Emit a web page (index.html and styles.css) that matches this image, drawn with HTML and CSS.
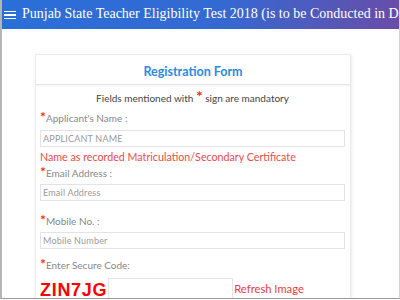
FILE: index.html
```html
<html>
<head>
  <title>PSTET 2018 - Registration</title>
  <link rel="stylesheet" href="styles.css">
</head>
<body>
  <div class="page">
    <div class="topbar">
      <div class="burger"><span></span><span></span><span></span></div>
      <div class="title">Punjab State Teacher Eligibility Test 2018 (is to be Conducted in December 2018)</div>
    </div>

    <div class="card">
      <div class="card-head">Registration Form</div>
      <div class="card-body">
        <div class="note">Fields mentioned with <span class="star big">*</span> sign are mandatory</div>

        <div class="label first"><span class="star">*</span>Applicant's Name :</div>
        <input class="field" type="text" placeholder="APPLICANT NAME">
        <div class="hint">Name as recorded Matriculation/Secondary Certificate</div>

        <div class="label tight"><span class="star">*</span>Email Address :</div>
        <input class="field" type="text" placeholder="Email Address">

        <div class="label"><span class="star">*</span>Mobile No. :</div>
        <input class="field" type="text" placeholder="Mobile Number">

        <div class="label code-label"><span class="star">*</span>Enter Secure Code:</div>
        <div class="captcha">
          <span class="code">ZIN7JG</span>
          <input class="code-input" type="text">
          <a class="refresh" href="#">Refresh Image</a>
        </div>
      </div>
    </div>
  </div>
</body>
</html>
```

FILE: styles.css
```css
html, body {
  margin: 0;
  padding: 0;
  height: 100%;
  overflow: hidden;
}
body {
  font: 10px Lato, sans-serif;
  background: #fff;
}
.page {
  height: 299px;
  box-sizing: border-box;
  border-left: 2px solid #b5b5b5;
  border-right: 1px solid #d5d5d5;
  border-bottom: 1px solid #999;
  overflow: hidden;
}
.topbar {
  height: 29px;
  margin-left: -2px;
  margin-right: -1px;
  display: flex;
  align-items: center;
  background: linear-gradient(100deg, #2a6fd9 0%, #3469d2 55%, #6a4ca8 100%);
  color: #fff;
  overflow: hidden;
  white-space: nowrap;
}
.burger {
  display: flex;
  flex-direction: column;
  gap: 2px;
  width: 12px;
  margin: 1px 6px 0 4px;
  flex: none;
}
.burger span {
  display: block;
  height: 1.5px;
  background: #fff;
}
.title {
  font: 14px "Liberation Serif", serif;
  margin-top: -1px;
}
.card {
  margin: 25px 0 0 33px;
  width: 314px;
  height: 260px;
  border: 1px solid #ececec;
  box-shadow: 1px 1px 3px rgba(0, 0, 0, 0.08);
}
.card-head {
  height: 30px;
  box-sizing: border-box;
  padding-top: 10px;
  line-height: 14px;
  text-align: center;
  font-weight: bold;
  font-size: 12.5px;
  color: #2a8be6;
  border-bottom: 1px solid #e6e6e6;
  box-shadow: 0 1px 2px rgba(0, 0, 0, 0.05);
}
.card-body {
  padding: 0 5px 0 4px;
}
.note {
  text-align: center;
  color: #444;
  font-size: 10px;
  line-height: 14px;
  margin-top: 6px;
}
.star {
  color: #f03030;
  font-size: 14px;
  font-weight: bold;
  line-height: 10px;
}
.star.big {
  font-size: 16px;
}
.label {
  color: #888;
  line-height: 12px;
  height: 12px;
  margin-top: 14px;
}
.label.first {
  margin-top: 7px;
}
.label.tight {
  margin-top: 3px;
}
.label.code-label {
  margin-top: 10px;
}
.field {
  display: block;
  width: 100%;
  height: 17px;
  box-sizing: border-box;
  margin-top: 5px;
  border: 1px solid #e3e3e3;
  padding: 0 2px;
  font: 9px Lato, sans-serif;
  letter-spacing: 0.2px;
  color: #444;
  outline: none;
}
.label.first + .field {
  margin-top: 6px;
}
.field::placeholder {
  color: #9a9a9a;
}
.hint {
  color: #f04a4a;
  font-size: 10.7px;
  line-height: 14px;
  margin-top: 3px;
}
.captcha {
  display: flex;
  align-items: flex-start;
  margin-top: 7px;
}
.code {
  font: bold 18px "Liberation Sans", sans-serif;
  color: #ff0000;
  letter-spacing: 0.7px;
  line-height: 20px;
  margin-top: 2px;
}
.code-input {
  width: 125px;
  height: 22px;
  box-sizing: border-box;
  border: 1px solid #e3e3e3;
  margin-left: 1px;
  outline: none;
}
.refresh {
  color: #f03c3c;
  text-decoration: none;
  font-size: 11.2px;
  line-height: 14px;
  margin: 4px 0 0 1px;
}
```
